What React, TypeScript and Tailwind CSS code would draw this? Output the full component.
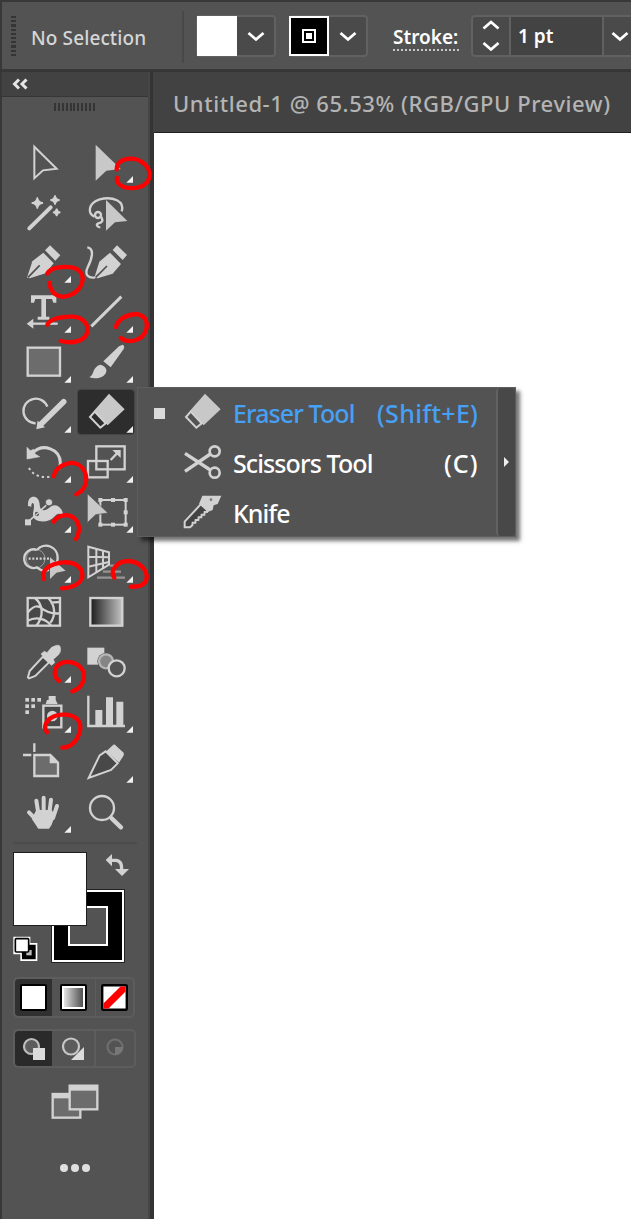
import React from "react";

const LIGHT = "#d2d2d2";

// Every tool glyph is drawn on a 186 x 150 grid, one grid per toolbox cell.
const Glyph = ({ children, corner = false }: { children: React.ReactNode; corner?: boolean }) => {
    return (
        <svg width="62" height="50" viewBox="0 0 186 150" fill="none" stroke={LIGHT} strokeWidth={7} className="shrink-0">
            {children}
            {corner && <path d="M154 134H174V114Z" fill="#f0f0f0" stroke="none" />}
        </svg>
    );
};

const eraser = (
    <>
        <path d="M102 17L149 64L98 112L57 68Z" fill="#c8c8c8" stroke="none" />
        <path d="M59 71L45 87L76 119L92 106Z" strokeWidth={6} />
    </>
);

const star = (x: number, y: number, r: number) => (
    <path
        d={`M${x} ${y - r}Q${x + 2} ${y - 2} ${x + r} ${y}Q${x + 2} ${y + 2} ${x} ${y + r}Q${x - 2} ${y + 2} ${x - r} ${y}Q${x - 2} ${y - 2} ${x} ${y - r}Z`}
        fill={LIGHT}
        strokeWidth={4}
    />
);

const tools: { name: string; corner?: boolean; active?: boolean; art: React.ReactNode }[] = [
    {
        name: "selection",
        art: <path d="M64 26L131 92L90 97L64 121Z" strokeWidth={6} />,
    },
    {
        name: "direct-selection",
        corner: true,
        art: <path d="M62 20V128L94 98L137 93Z" fill="#c8c8c8" stroke="none" />,
    },
    {
        name: "magic-wand",
        art: (
            <>
                <path d="M49 121L113 58" strokeWidth={12} strokeLinecap="round" />
                {star(73, 45, 17)}
                {star(126, 36, 14)}
                {star(131, 73, 11)}
            </>
        ),
    },
    {
        name: "lasso",
        art: (
            <>
                <path d="M58 86C38 76 38 46 74 34C114 24 150 40 140 70" />
                <circle cx="69" cy="81" r="9" />
                <path d="M78 86C86 98 82 104 70 106C62 110 66 118 76 118" />
                <path d="M93 36V128L120 103L157 99Z" fill="#c8c8c8" stroke="none" />
            </>
        ),
    },
    {
        name: "pen",
        corner: true,
        art: (
            <>
                <path d="M96 37L111 22L142 52L127 68Z" fill={LIGHT} stroke="none" />
                <path d="M42 119L58 70L91 44L122 76L98 106L50 121Z" fill={LIGHT} stroke="none" />
                <path d="M45 118L80 82" stroke="#505050" strokeWidth={5} />
            </>
        ),
    },
    {
        name: "curvature",
        art: (
            <>
                <path d="M113 36L126 22L156 51L143 66Z" fill={LIGHT} stroke="none" />
                <path d="M58 119L73 71L105 44L138 78L113 107L68 121Z" fill={LIGHT} stroke="none" />
                <path d="M62 118L96 84" stroke="#505050" strokeWidth={5} />
                <path d="M37 28C60 31 50 66 38 88C27 112 42 121 60 118" />
            </>
        ),
    },
    {
        name: "type",
        corner: true,
        art: (
            <>
                <path d="M54 22H130V44H121L117 33H99V86H109V95H74V86H85V33H67L63 44H54Z" fill={LIGHT} stroke="none" />
                <path d="M58 107H134" />
                <path d="M41 107L61 92V122Z" fill={LIGHT} stroke="none" />
            </>
        ),
    },
    {
        name: "line",
        corner: true,
        art: <path d="M49 115L139 26" strokeWidth={9} />,
    },
    {
        name: "rectangle",
        corner: true,
        art: <rect x="44" y="29" width="97" height="84" fill="#6c6c6c" />,
    },
    {
        name: "brush",
        corner: true,
        art: (
            <>
                <path d="M143 20Q150 23 146 33L107 88L85 70L132 25Z" fill={LIGHT} stroke="none" />
                <path d="M43 118C60 108 50 90 75 80C93 82 102 100 86 113C72 123 56 122 43 118Z" fill={LIGHT} stroke="none" />
            </>
        ),
    },
    {
        name: "shaper",
        corner: true,
        art: (
            <>
                <path d="M103 56A37 37 0 1 0 68 106" />
                <path d="M152 41L82 110" strokeWidth={17} strokeLinecap="round" />
                <path d="M70 124L74 98L96 118Z" fill={LIGHT} stroke="none" />
            </>
        ),
    },
    { name: "eraser", corner: true, active: true, art: eraser },
    {
        name: "rotate",
        corner: true,
        art: (
            <>
                <path d="M62 42C90 16 141 32 142 74Q142 86 137 94" strokeWidth={9} />
                <path d="M42 28V63L80 56L66 48L62 34L52 38Z" fill={LIGHT} strokeWidth={2} />
                <path d="M48 90C60 114 92 124 124 112" strokeDasharray="7 9" strokeWidth={6} />
            </>
        ),
    },
    {
        name: "scale",
        corner: true,
        art: (
            <>
                <rect x="64" y="25" width="85" height="69" />
                <rect x="39" y="69" width="59" height="49" />
                <path d="M107 66L128 44" />
                <path d="M112 36H137V60Z" fill={LIGHT} stroke="none" />
            </>
        ),
    },
    {
        name: "width",
        corner: true,
        art: (
            <>
                <path
                    d="M45 54C43 24 64 22 74 32C84 44 76 60 88 66C100 70 106 60 116 54C132 46 150 62 151 84C142 74 132 76 124 86C112 100 84 106 66 94C54 84 66 62 62 48C58 42 55 46 55 56Z"
                    fill={LIGHT}
                    stroke="none"
                />
                <path d="M47 100L106 46" strokeWidth={5} />
                <circle cx="72" cy="78" r="9" fill="#535353" strokeWidth={5} />
                <path d="M68 82L78 73" strokeWidth={4} />
                <rect x="36" y="94" width="18" height="18" fill={LIGHT} stroke="none" />
                <circle cx="108" cy="43" r="11" fill={LIGHT} stroke="#535353" strokeWidth={3} />
            </>
        ),
    },
    {
        name: "free-transform",
        corner: true,
        art: (
            <>
                <rect x="76" y="36" width="76" height="74" strokeWidth={6} />
                {[
                    [76, 36], [114, 36], [152, 36], [152, 73], [152, 110], [114, 110], [76, 110],
                ].map(([x, y]) => (
                    <rect key={`${x}-${y}`} x={x - 6} y={y - 6} width="12" height="12" fill={LIGHT} stroke="none" />
                ))}
                <path d="M37 17V104L62 80L99 75Z" fill="#c8c8c8" stroke="#535353" strokeWidth={2} />
            </>
        ),
    },
    {
        name: "shape-builder",
        corner: true,
        art: (
            <>
                <circle cx="68" cy="62" r="28" stroke="#9a9a9a" strokeWidth={3} />
                <path d="M72 36A28 28 0 1 0 72 88A37 37 0 0 0 108 96M72 36A35 35 0 0 1 134 60Q134 68 130 76" />
                <path d="M47 62H114" strokeDasharray="6 5" />
                <path d="M111 58V123L130 104L158 98Z" fill="#c8c8c8" stroke="none" />
            </>
        ),
    },
    {
        name: "perspective",
        corner: true,
        art: (
            <>
                <path d="M66 119H150M84 101H138M104 83H124" stroke="#959595" />
                <path d="M40 26L102 43V80L40 118ZM64 33V104M84 38V92M40 56L102 58M40 86L102 72" strokeWidth={6} />
            </>
        ),
    },
    {
        name: "mesh",
        art: (
            <>
                <rect x="44" y="30" width="97" height="83" fill="#484848" />
                <path d="M44 74C62 52 72 52 82 58C102 74 122 78 141 76M44 98C70 84 100 92 114 113M66 30C92 52 92 86 70 113M106 30C128 54 128 84 112 104M112 44L141 42" />
            </>
        ),
    },
    {
        name: "gradient",
        art: (
            <>
                <defs>
                    <linearGradient id="tool-gradient">
                        <stop offset="0" stopColor="#1c1c1c" />
                        <stop offset="1" stopColor="#c4c4c4" />
                    </linearGradient>
                </defs>
                <rect x="46" y="30" width="96" height="83" fill="url(#tool-gradient)" />
            </>
        ),
    },
    {
        name: "eyedropper",
        corner: true,
        art: (
            <>
                <path d="M45 118L50 99L90 56L108 73L67 114L48 121Z" fill="#484848" strokeWidth={6} />
                <path d="M84 48L94 40L102 44L116 28Q142 14 142 30Q146 44 130 56L121 64L125 74L115 82Z" fill={LIGHT} stroke={LIGHT} strokeWidth={2} />
            </>
        ),
    },
    {
        name: "blend",
        art: (
            <>
                <rect x="37" y="29" width="51" height="51" fill={LIGHT} stroke="none" />
                <circle cx="93" cy="70" r="26" fill="#535353" stroke="none" />
                <circle cx="93" cy="70" r="21" fill="#858585" stroke="#b5b5b5" />
                <circle cx="125" cy="91" r="24" fill="#535353" />
            </>
        ),
    },
    {
        name: "sprayer",
        corner: true,
        art: (
            <>
                {[
                    [42, 35], [60, 35], [78, 35], [42, 54], [60, 54], [42, 72],
                ].map(([x, y]) => (
                    <rect key={`${x}-${y}`} x={x - 5} y={y - 5} width="11" height="11" fill={LIGHT} stroke="none" />
                ))}
                <path d="M98 48L102 36H107V24H128V36L134 48Z" fill={LIGHT} stroke="none" />
                <rect x="91" y="53" width="54" height="65" fill="#484848" />
                <circle cx="118" cy="84" r="16" fill={LIGHT} stroke="none" />
            </>
        ),
    },
    {
        name: "graph",
        corner: true,
        art: (
            <>
                <path d="M40 23V114H150" />
                <path d="M61 66H82V114H61ZM93 28H114V114H93ZM124 41H145V114H124Z" fill={LIGHT} stroke="none" />
            </>
        ),
    },
    {
        name: "artboard",
        art: (
            <>
                <path d="M64 51H112L135 74V114H64Z" fill="#6c6c6c" />
                <path d="M110 51V76H135Z" fill={LIGHT} stroke="none" />
                <path d="M30 51H55M64 16V42" />
            </>
        ),
    },
    {
        name: "slice",
        corner: true,
        art: (
            <>
                <path d="M41 120L74 52L92 40L128 76L108 96Z" fill="#484848" strokeWidth={6} />
                <path d="M115 20Q120 19 123 23L146 44Q148 50 145 54L132 74L94 40Z" fill={LIGHT} stroke="none" />
            </>
        ),
    },
    {
        name: "hand",
        corner: true,
        art: (
            <>
                <path d="M70 38L76 76M92 29V72M114 35L109 76M132 54L120 90M48 73L74 100" strokeWidth={12} strokeLinecap="round" />
                <path d="M70 66H116L126 82L116 110L108 122H76L56 92Z" fill={LIGHT} stroke="none" />
            </>
        ),
    },
    {
        name: "zoom",
        art: (
            <>
                <circle cx="81" cy="60" r="36" />
                <path d="M110 91L138 118" strokeWidth={13} strokeLinecap="round" />
            </>
        ),
    },
];

// Hand drawn red rings around the little flyout corners.
const rings = [
    { y: -24, d: "M350 118C350 84 400 78 426 96C450 114 456 136 440 158C424 176 390 178 370 170C352 162 349 152 351 143" },
    { y: 306, d: "M142 100C152 82 190 78 215 82C246 88 254 112 244 134C234 158 206 172 184 170C160 166 150 146 148 128" },
    { y: 306, d: "M142 254C150 236 188 228 220 230C252 234 266 254 262 276C256 304 216 312 182 303" },
    { y: 306, d: "M348 261C352 238 380 224 408 222C440 226 446 252 436 276C424 302 386 312 362 294" },
    { y: 741, d: "M161 274C166 248 196 232 222 234C252 240 264 272 256 298C252 314 242 320 229 328" },
    { y: 741, d: "M161 410C170 394 196 384 218 396C240 410 242 438 228 462" },
    { y: 1191, d: "M132 132C120 106 150 86 190 82C226 80 250 98 247 126C240 150 214 158 186 160" },
    { y: 1191, d: "M343 128C328 106 352 78 386 78C418 80 442 104 440 130C436 152 414 156 392 155" },
    { y: 1191, d: "M177 437C156 422 162 390 190 382C222 376 254 394 252 428C248 454 234 464 217 469" },
    { y: 1641, d: "M141 142C126 120 144 92 186 89C222 86 242 104 241 130C238 160 216 188 187 188" },
];

const Chevron = ({ up = false }: { up?: boolean }) => (
    <svg width="18" height="11" viewBox="0 0 18 11" fill="none" stroke="#fff" strokeWidth="2.8">
        <path d={up ? "M1.5 8.5L9 2L16.5 8.5" : "M1.5 2L9 8.5L16.5 2"} />
    </svg>
);

const OptionsBar = () => {
    return (
        <div className="flex h-[70px] shrink-0 items-start overflow-hidden border-b border-t-2 border-l-2 border-[#383838] bg-[#535353] pt-[13px]">
            <div className="ml-[9px] flex w-[5px] shrink-0 flex-col gap-[2px] pt-px">
                {Array.from({ length: 10 }, (_, i) => (
                    <span key={i} className="h-[2.2px] bg-[#353535]" />
                ))}
            </div>
            <span className="ml-[15px] w-[116px] shrink-0 whitespace-nowrap pt-[10px] text-[19px] leading-[26px] font-medium tracking-[0.1px] text-[#d6d6d6]">
                No Selection
            </span>
            <div className="-mt-1 ml-[35px] h-[52px] w-[2px] shrink-0 bg-[#484848]" />
            <div className="ml-[12px] flex h-[42px] w-[80px] shrink-0 items-center rounded-[4px] border-2 border-[#616161] bg-[#4a4a4a]">
                <div className="-ml-px h-10 w-10 bg-white" />
                <div className="flex flex-1 justify-center">
                    <Chevron />
                </div>
            </div>
            <div className="ml-[13px] flex h-[42px] w-[79px] shrink-0 items-center rounded-[4px] border-2 border-[#616161] bg-[#4a4a4a]">
                <div className="-ml-[2px] flex h-10 w-10 items-center justify-center border-2 border-white bg-black">
                    <div className="flex h-[14px] w-[14px] items-center justify-center border-2 border-white">
                        <div className="h-[6px] w-[6px] bg-white" />
                    </div>
                </div>
                <div className="flex flex-1 justify-center">
                    <Chevron />
                </div>
            </div>
            <div className="ml-[25px] mt-[10px] w-[66px] shrink-0 border-b-2 border-dotted border-[#c8c8c8] text-[19px] leading-[24px] font-semibold tracking-[0px] whitespace-nowrap text-white">
                Stroke:
            </div>
            <div className="ml-[12px] flex h-[42px] w-[180px] shrink-0 rounded-[4px] border-2 border-[#616161] bg-[#4a4a4a]">
                <div className="flex w-[36px] shrink-0 flex-col items-center justify-between py-[3px]">
                    <Chevron up />
                    <Chevron />
                </div>
                <div className="w-[95px] shrink-0 border-x-2 border-[#616161] bg-[#434343] pl-[7px] text-[19px] leading-[38px] font-semibold text-white">
                    1 pt
                </div>
                <div className="flex w-[31px] shrink-0 items-center justify-center">
                    <Chevron />
                </div>
            </div>
        </div>
    );
};

const FillAndStroke = () => {
    return (
        <div className="relative mx-[11px] h-[131px] border-t-2 border-[#4b4b4b]">
            <div className="absolute top-[45px] left-[38px] h-[74px] w-[74px] border border-[#222] bg-white p-[2px]">
                <div className="h-full w-full bg-black p-[14px]">
                    <div className="h-full w-full border-2 border-white bg-[#535353]" />
                </div>
            </div>
            <div className="absolute top-[8px] left-0 h-[74px] w-[74px] border border-[#1e1e1e] bg-white" />
            <svg className="absolute top-[8px] left-[92px]" width="26" height="25" viewBox="0 0 78 75" fill="none">
                <path d="M18 25H34Q51 27 50 52" stroke={LIGHT} strokeWidth="10" />
                <path d="M2 24L21 6V43ZM30 51H72L51 72Z" fill={LIGHT} />
            </svg>
            <svg className="absolute top-[92px] left-0" width="25" height="26" viewBox="0 0 75 78">
                <path d="M1 2H52V21H73V75H22V55H1Z" fill="#fff" />
                <path d="M26 34H47V26H68V70H27Z" fill="#000" />
                <path d="M40 42H56V58H40Z" fill="#bbb" />
                <rect x="7" y="8" width="40" height="40" rx="3" fill="#fff" stroke="#000" strokeWidth="5" />
            </svg>
        </div>
    );
};

const PaintModes = () => {
    return (
        <div className="mx-[11px] flex h-[41px] w-[122px] items-stretch rounded-[5px] border-2 border-[#5d5d5d]">
            <div className="flex w-[37px] items-center justify-center rounded-l bg-[#303030]">
                <div className="h-[27px] w-[27px] rounded-[2px] border-2 border-black bg-white" />
            </div>
            <div className="flex w-[44px] items-center justify-center border-r border-[#5d5d5d]">
                <div className="h-[27px] w-[27px] rounded-[2px] border-2 border-black bg-white p-[2px]">
                    <div className="h-full w-full bg-linear-to-r from-[#e4e4e4] to-[#505050]" />
                </div>
            </div>
            <div className="flex flex-1 items-center justify-center">
                <svg width="27" height="27" viewBox="0 0 27 27">
                    <rect x="1.2" y="1.2" width="24.6" height="24.6" rx="1" fill="#fff" stroke="#000" strokeWidth="2.4" />
                    <path d="M2.4 19.5V24.6H7.5L24.6 7.5V2.4H19.5Z" fill="#f00" />
                </svg>
            </div>
        </div>
    );
};

const DrawModes = () => {
    return (
        <div className="mx-[11px] mt-[11px] flex h-[39px] w-[123px] items-stretch rounded-[5px] border-2 border-[#5d5d5d]">
            <div className="flex w-[37px] items-center justify-center rounded-l bg-[#2a2a2a]">
                <svg width="24" height="24" viewBox="0 0 24 24">
                    <circle cx="9.5" cy="9.5" r="7.5" fill="#5c5c5c" stroke="#bdbdbd" strokeWidth="2.2" />
                    <rect x="11" y="11" width="12" height="12" fill="#dcdcdc" />
                </svg>
            </div>
            <div className="flex w-[44px] items-center justify-center border-r-2 border-[#5d5d5d]">
                <svg width="24" height="24" viewBox="0 0 24 24">
                    <path d="M10 23H23V10Z" fill="#dcdcdc" />
                    <circle cx="10" cy="9.5" r="8" fill="#5c5c5c" stroke="#c6c6c6" strokeWidth="2.2" />
                </svg>
            </div>
            <div className="flex flex-1 items-center justify-center">
                <svg width="20" height="24" viewBox="0 0 20 24">
                    <circle cx="10" cy="10" r="7.5" fill="none" stroke="#707070" strokeWidth="2" />
                    <path d="M10 10H18A8 8 0 0 1 10 18Z" fill="#777" />
                </svg>
            </div>
        </div>
    );
};

const Toolbox = () => {
    return (
        <div className="relative flex w-[146px] flex-1 flex-col bg-[#535353]">
            <div className="ml-[52px] mt-[6px] flex h-[8px] w-[41px] justify-between">
                {Array.from({ length: 11 }, (_, i) => (
                    <span key={i} className="w-[2px] bg-[#353535]" />
                ))}
            </div>
            <div className="mt-[27px] ml-[11px] grid w-[124px] grid-cols-2">
                {tools.map((tool) => (
                    <div key={tool.name} className="relative h-[50px]">
                        {tool.active && (
                            <div className="absolute top-[1px] left-[2px] h-[46px] w-[58px] rounded-[4px] border border-[#454545] bg-[#2d2d2d]" />
                        )}
                        <div className="relative">
                            <Glyph corner={tool.corner}>{tool.art}</Glyph>
                        </div>
                    </div>
                ))}
            </div>
            <svg
                className="pointer-events-none absolute top-[41px] -left-[2px] z-10"
                width="160"
                height="700"
                viewBox="0 0 480 2100"
                fill="none"
                stroke="#f00"
                strokeWidth="13"
                strokeLinecap="round"
            >
                {rings.map((ring) => (
                    <path key={ring.d} d={ring.d} transform={`translate(0 ${ring.y})`} />
                ))}
            </svg>
            <div className="mt-[4px]">
                <FillAndStroke />
            </div>
            <div className="mt-[4px]">
                <PaintModes />
            </div>
            <DrawModes />
            <svg className="mt-[16px] ml-[49px]" width="48" height="36" viewBox="0 0 144 108" fill="#6c6c6c" stroke={LIGHT} strokeWidth="7">
                <rect x="5" y="30" width="83" height="71" />
                <path d="M5 36H88" strokeWidth="14" />
                <rect x="56" y="5" width="83" height="71" />
                <path d="M56 12H139" strokeWidth="16" />
            </svg>
            <div className="mt-[44px] ml-[58px] flex gap-[3px]">
                <span className="h-[8px] w-[8px] rounded-full bg-[#e0e0e0]" />
                <span className="h-[8px] w-[8px] rounded-full bg-[#e0e0e0]" />
                <span className="h-[8px] w-[8px] rounded-full bg-[#e0e0e0]" />
            </div>
        </div>
    );
};

const EraserMenu = () => {
    return (
        <div className="absolute top-[387px] left-[137px] z-20 flex h-[150px] w-[379px] border border-[#5e5e5e] bg-[#535353] text-[25px] leading-[50px] font-medium whitespace-nowrap text-white shadow-[4px_4px_4px_rgba(0,0,0,0.55)]">
            <div className="flex w-[358px] flex-col">
                <div className="flex h-[50px] text-[#46a0f5]">
                    <span className="mt-[20px] ml-[16px] h-[11px] w-[11px] bg-[#dadada]" />
                    <span className="ml-[6px]">
                        <Glyph>{eraser}</Glyph>
                    </span>
                    <span className="w-[144px] tracking-[-0.9px]">Eraser Tool</span>
                    <span className="tracking-[0.3px]">(Shift+E)</span>
                </div>
                <div className="flex h-[50px]">
                    <span className="ml-[33px]">
                        <Glyph>
                            <path d="M42 46L118 96M42 100L118 48" strokeWidth={10} />
                            <circle cx="131" cy="40" r="15" strokeWidth={8} />
                            <circle cx="131" cy="104" r="15" strokeWidth={8} />
                        </Glyph>
                    </span>
                    <span className="w-[211px] tracking-[-0.9px]">Scissors Tool</span>
                    <span className="tracking-[1px]">(C)</span>
                </div>
                <div className="flex h-[48px]">
                    <span className="ml-[33px]">
                        <Glyph>
                            <path
                                d="M41 118V101L92 46L112 64L108 72L101 72L100 80L92 80L91 88L83 88L82 96L74 96L73 104L65 104L64 112L57 118Z"
                                fill="#444"
                                strokeWidth={6}
                            />
                            <path d="M94 23H151L140 48L128 52L125 66L110 72L84 48Z" fill={LIGHT} stroke="none" />
                            <circle cx="120" cy="35" r="4" fill="#777" stroke="none" />
                        </Glyph>
                    </span>
                    <span className="tracking-[-1px]">Knife</span>
                </div>
            </div>
            <div className="flex flex-1 items-center justify-center rounded-[4px] border-l-2 border-[#626262] bg-[#484848]">
                <svg width="5" height="10" viewBox="0 0 5 10" fill="#eee">
                    <path d="M0 0L5 5L0 10Z" />
                </svg>
            </div>
        </div>
    );
};

const App = () => {
    return (
        <div className="relative flex h-[1219px] w-[631px] flex-col overflow-hidden bg-[#363636] font-['Noto_Sans','Open_Sans',sans-serif]">
            <OptionsBar />
            <div className="flex flex-1 pt-[2px]">
                <div className="flex w-[148px] flex-col border-l-2 border-[#383838]">
                    <div className="flex h-[24px] items-center bg-[#424242] pl-[10px]">
                        <svg width="16" height="12" viewBox="0 0 16 12" fill="none" stroke="#e6e6e6" strokeWidth="3">
                            <path d="M7 1.5L2.5 6L7 10.5M14.5 1.5L10 6L14.5 10.5" />
                        </svg>
                    </div>
                    <div className="h-px bg-[#363636]" />
                    <Toolbox />
                </div>
                <div className="w-[2px] bg-[#464646]" />
                <div className="w-[3px] bg-[#343434]" />
                <div className="flex flex-1 flex-col">
                    <div className="h-[60px] bg-[#424242] pl-[20px] text-[22px] leading-[63px] font-medium tracking-[0.57px] whitespace-nowrap text-[#b4b4b4]">
                        Untitled-1 @ 65.53% (RGB/GPU Preview)
                    </div>
                    <div className="ml-px flex-1 border-t border-[#222] bg-white" />
                </div>
            </div>
            <EraserMenu />
        </div>
    );
};

export default App;
